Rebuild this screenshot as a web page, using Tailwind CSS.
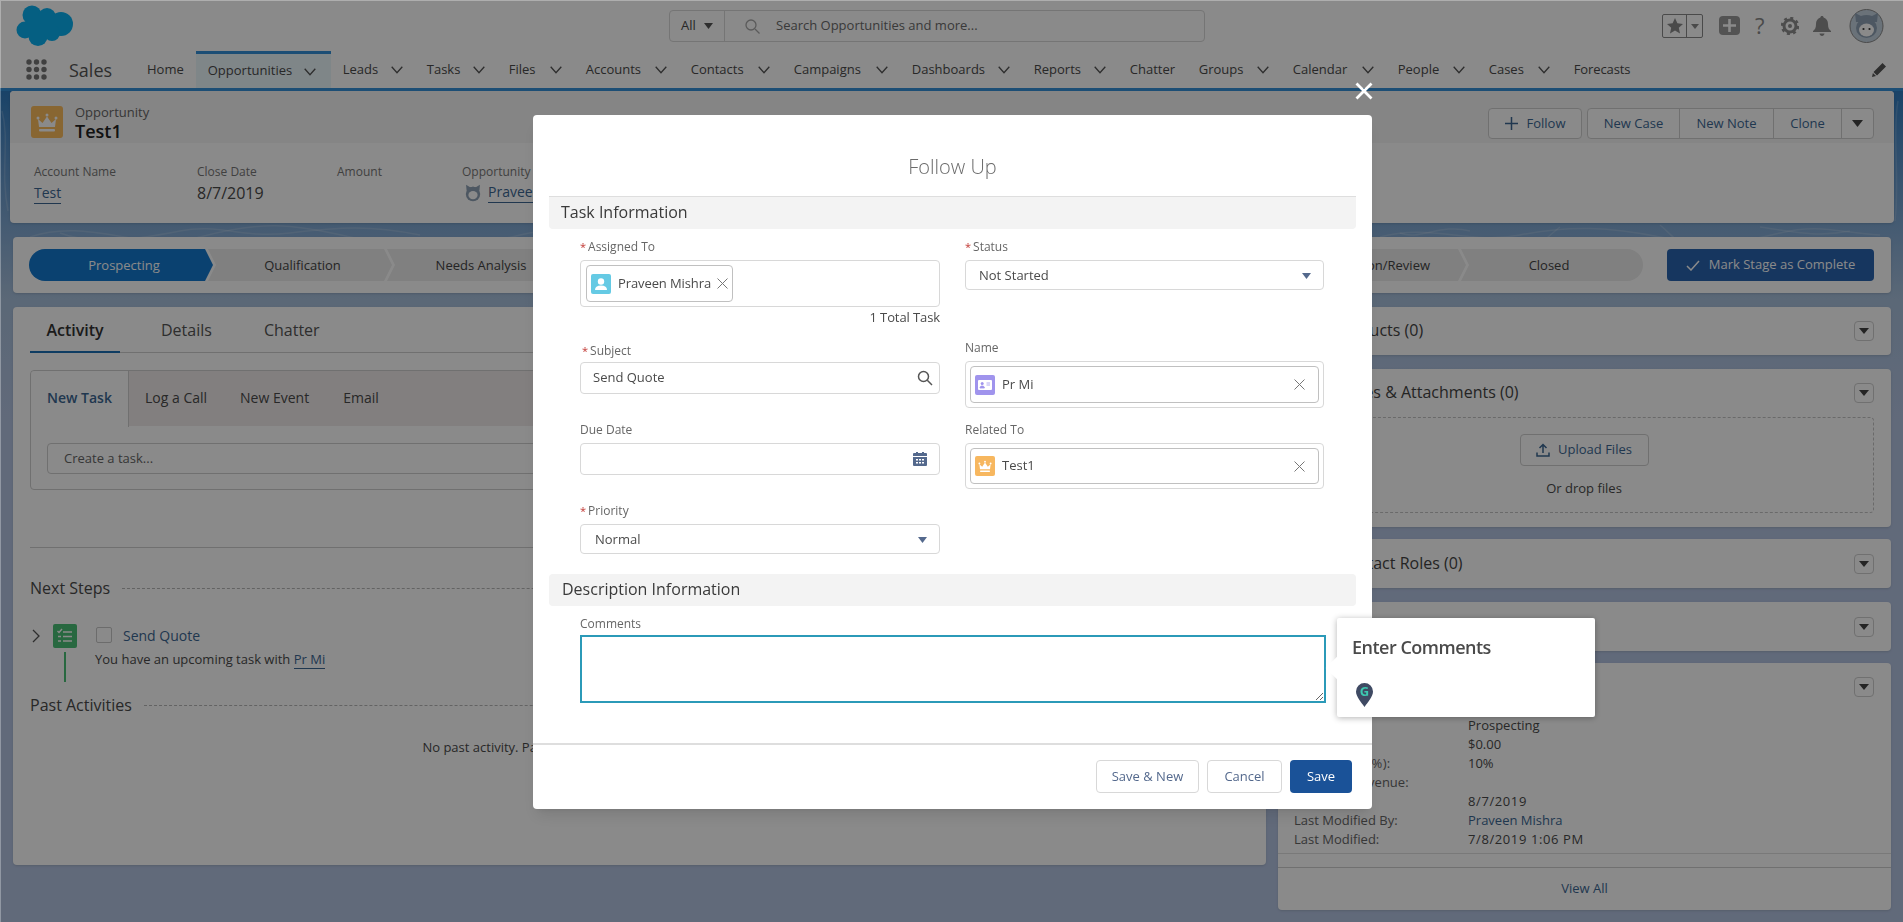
<!DOCTYPE html>
<html lang="en">
<head>
    <meta charset="UTF-8">
    <title>Follow Up</title>
    <script src="https://cdn.jsdelivr.net/npm/@tailwindcss/browser@4"></script>
</head>
<body class="h-[922px] overflow-hidden font-['Open_Sans',sans-serif] text-[13px] text-[#4a4a4a]">
    <!-- header -->
    <div class="h-[51px] bg-white relative flex items-start">
        <svg class="absolute left-[14px] top-[4px]" width="62" height="44" viewBox="14 4 62 44"><g fill="#0ab0f0"><circle cx="32" cy="15" r="9.5"/><circle cx="47" cy="17" r="9"/><circle cx="61" cy="24" r="12"/><circle cx="25" cy="30" r="8.5"/><circle cx="38" cy="36.5" r="9.5"/><circle cx="52" cy="33" r="8"/><rect x="28" y="16" width="28" height="18"/></g></svg>
        <div class="ml-[669px] mt-[10px] w-[536px] h-[32px] border border-[#d8d8d8] rounded flex items-center">
            <div class="w-[55px] h-full border-r border-[#d8d8d8] flex items-center pl-[11px]">All<svg class="ml-[8px]" width="9" height="6" viewBox="0 0 9 6"><path d="M0 0h9L4.500 6z" fill="#555"/></svg></div>
            <svg class="ml-[20px]" width="15" height="15" viewBox="0 0 15 15" fill="none" stroke="#a8a8a8" stroke-width="1.300"><circle cx="6" cy="6" r="5"/><path d="M10 10l4.500 4.500"/></svg>
            <span class="ml-[16px] text-[#6b6b6b]">Search Opportunities and more...</span>
        </div>
        <div class="ml-[457px] mt-[14px] w-[41px] h-[24px] border border-[#8a8a8a] rounded-[2px] flex items-center">
            <div class="w-[24px] h-full border-r border-[#8a8a8a] flex items-center justify-center"><svg width="16" height="16" viewBox="0 0 16 16"><path d="M8 0l2.400 5.300 5.600.6-4.200 3.800 1.200 5.700L8 12.500l-5 2.900 1.200-5.700L0 5.900l5.600-.6z" fill="#8a8a8a"/></svg></div>
            <svg class="ml-[4px]" width="8" height="5" viewBox="0 0 8 5"><path d="M0 0h8L4 5z" fill="#8a8a8a"/></svg>
        </div>
        <div class="ml-[16px] mt-[16px] w-[21px] h-[19px] rounded-[4px] bg-[#9a9a9a] flex items-center justify-center"><svg width="13" height="13" viewBox="0 0 13 13"><path d="M6.500 0v13M0 6.500h13" stroke="#fff" stroke-width="2.600"/></svg></div>
        <span class="ml-[15px] mt-[11px] text-[22px] leading-[28px] text-[#8a8a8a]">?</span>
        <svg class="ml-[16px] mt-[17px]" width="18" height="18" viewBox="0 0 18 18"><circle cx="9" cy="9" r="6" fill="none" stroke="#8f8f8f" stroke-width="3"/><circle cx="9" cy="9" r="8" fill="none" stroke="#8f8f8f" stroke-width="2.500" stroke-dasharray="3 3.280"/><circle cx="9" cy="9" r="2" fill="#8f8f8f"/></svg>
        <svg class="ml-[14px] mt-[16px]" width="18" height="20" viewBox="0 0 18 20"><path d="M9 0c1 0 1.600.7 1.600 1.600C13.500 2.400 15 5 15 8c0 4 1 5.500 3 7v1H0v-1c2-1.500 3-3 3-7 0-3 1.500-5.600 4.400-6.400C7.400.7 8 0 9 0zM6.500 17.500h5C11.300 19 10.300 20 9 20s-2.300-1-2.500-2.500z" fill="#8f8f8f"/></svg>
        <svg class="ml-[18px] mt-[9px]" width="35" height="34" viewBox="0 0 35 34"><circle cx="17.500" cy="17" r="16.500" fill="#c4d2e0" stroke="#8a8a8a" stroke-width="1"/><path d="M7 13L6 4l6 3c3.500-1.500 7.500-1.500 11 0l6-3-1 9z" fill="#8fa2b5"/><ellipse cx="17.500" cy="19" rx="10.500" ry="10" fill="#8fa2b5"/><ellipse cx="17.500" cy="21" rx="7.500" ry="6.500" fill="#fff"/><circle cx="14.500" cy="20" r="1.100" fill="#333"/><circle cx="20.500" cy="20" r="1.100" fill="#333"/></svg>
    </div>

    <!-- nav -->
    <div class="h-[40px] bg-white border-b-[3px] border-[#3490d8] flex items-stretch">
        <svg class="ml-[26px] mt-[8px]" width="21" height="21" viewBox="0 0 21 21" fill="#777"><circle cx="3" cy="3" r="2.700"/><circle cx="10.500" cy="3" r="2.700"/><circle cx="18" cy="3" r="2.700"/><circle cx="3" cy="10.500" r="2.700"/><circle cx="10.500" cy="10.500" r="2.700"/><circle cx="18" cy="10.500" r="2.700"/><circle cx="3" cy="18" r="2.700"/><circle cx="10.500" cy="18" r="2.700"/><circle cx="18" cy="18" r="2.700"/></svg>
        <span class="ml-[22px] w-[66px] text-[18px] leading-[38px] text-[#555]">Sales</span>
        <a class="px-3 flex items-center">Home</a>
        <a class="pl-3 pr-3 flex items-center bg-[#ebf7fc] border-t-[3px] border-[#3490d8] w-[135px]">Opportunities<svg class="ml-auto mr-[3px] mt-px" width="12" height="8" viewBox="0 0 12 8" fill="none" stroke="#555" stroke-width="1.300"><path d="M.7.7L6 6.800 11.300.7"/></svg></a>
        <a class="w-[84px] px-3 flex items-center">Leads<svg class="ml-auto" width="12" height="8" viewBox="0 0 12 8" fill="none" stroke="#555" stroke-width="1.300"><path d="M.7.7L6 6.800 11.300.7"/></svg></a>
        <a class="w-[82px] px-3 flex items-center">Tasks<svg class="ml-auto" width="12" height="8" viewBox="0 0 12 8" fill="none" stroke="#555" stroke-width="1.300"><path d="M.7.7L6 6.800 11.300.7"/></svg></a>
        <a class="w-[77px] px-3 flex items-center">Files<svg class="ml-auto" width="12" height="8" viewBox="0 0 12 8" fill="none" stroke="#555" stroke-width="1.300"><path d="M.7.7L6 6.800 11.300.7"/></svg></a>
        <a class="w-[105px] px-3 flex items-center">Accounts<svg class="ml-auto" width="12" height="8" viewBox="0 0 12 8" fill="none" stroke="#555" stroke-width="1.300"><path d="M.7.7L6 6.800 11.300.7"/></svg></a>
        <a class="w-[103px] px-3 flex items-center">Contacts<svg class="ml-auto" width="12" height="8" viewBox="0 0 12 8" fill="none" stroke="#555" stroke-width="1.300"><path d="M.7.7L6 6.800 11.300.7"/></svg></a>
        <a class="w-[118px] px-3 flex items-center">Campaigns<svg class="ml-auto" width="12" height="8" viewBox="0 0 12 8" fill="none" stroke="#555" stroke-width="1.300"><path d="M.7.7L6 6.800 11.300.7"/></svg></a>
        <a class="w-[122px] px-3 flex items-center">Dashboards<svg class="ml-auto" width="12" height="8" viewBox="0 0 12 8" fill="none" stroke="#555" stroke-width="1.300"><path d="M.7.7L6 6.800 11.300.7"/></svg></a>
        <a class="w-[96px] px-3 flex items-center">Reports<svg class="ml-auto" width="12" height="8" viewBox="0 0 12 8" fill="none" stroke="#555" stroke-width="1.300"><path d="M.7.7L6 6.800 11.300.7"/></svg></a>
        <a class="w-[69px] px-3 flex items-center">Chatter</a>
        <a class="w-[94px] px-3 flex items-center">Groups<svg class="ml-auto" width="12" height="8" viewBox="0 0 12 8" fill="none" stroke="#555" stroke-width="1.300"><path d="M.7.7L6 6.800 11.300.7"/></svg></a>
        <a class="w-[105px] px-3 flex items-center">Calendar<svg class="ml-auto" width="12" height="8" viewBox="0 0 12 8" fill="none" stroke="#555" stroke-width="1.300"><path d="M.7.7L6 6.800 11.300.7"/></svg></a>
        <a class="w-[91px] px-3 flex items-center">People<svg class="ml-auto" width="12" height="8" viewBox="0 0 12 8" fill="none" stroke="#555" stroke-width="1.300"><path d="M.7.7L6 6.800 11.300.7"/></svg></a>
        <a class="w-[85px] px-3 flex items-center">Cases<svg class="ml-auto" width="12" height="8" viewBox="0 0 12 8" fill="none" stroke="#555" stroke-width="1.300"><path d="M.7.7L6 6.800 11.300.7"/></svg></a>
        <a class="px-3 flex items-center tracking-[-0.1px]">Forecasts</a>
        <svg class="ml-auto mr-[17px] mt-[12px]" width="14" height="14" viewBox="0 0 14 14"><path d="M10.500 0L14 3.500 5 12.500 1.500 9zM.9 10L4 13.100 0 14z" fill="#555"/></svg>
    </div>

    <!-- page -->
    <div class="relative h-[831px] bg-linear-to-b from-[#2f7cc0] from-0% via-[#a8c0dc] via-[25%] to-[#b4c4e2] to-[40%] overflow-hidden">
        <svg class="absolute left-0 top-0" width="1903" height="300" viewBox="0 0 1903 300" fill="none" stroke="#fff" stroke-opacity=".16" stroke-width="1.500">
            <path d="M30 146c60-20 110 16 170 0s90-14 150 0 120 10 170-2 90 4 140 4"/>
            <path d="M60 142c30 12 80 6 120-2s60 8 110 2 80-8 130 2"/>
            <path d="M1380 146c50-14 90 8 140-2s90-8 140 2 80 6 120-4 60 0 100 2"/>
            <path d="M1400 142c20 8 40-10 70-2M1560 136c-10 8-20 16-20 22M1660 134c10 8 14 16 30 22M1760 136c40 6 60 10 90 4"/>
            <path d="M2 20c8 30-2 60 6 100M1898 10c-6 30 2 80-3 120"/>
        </svg>
        <div class="relative">
            <!-- highlights -->
            <div class="mx-[9px] ml-[10px] h-[132px] bg-white rounded shadow-sm">
                <div class="h-[52px] bg-[#f5f5f5] rounded-t flex items-start">
                    <div class="ml-[21px] mt-[15px] w-[32px] h-[32px] bg-[#fbbc5d] rounded-[3px] shrink-0"><svg width="32" height="32" viewBox="0 0 32 32" fill="#fff"><path d="M7 13l4.500 4L16 10.500l4.500 6.500L25 13l-1 8H8z"/><circle cx="7" cy="12" r="1.500"/><circle cx="16" cy="9" r="1.500"/><circle cx="25" cy="12" r="1.500"/><rect x="8" y="23" width="16" height="2.500" rx="1"/></svg></div>
                    <div class="ml-[12px] mt-[13px]">
                        <div class="leading-[17px] text-[#666]">Opportunity</div>
                        <div class="text-[18px] leading-[20px] font-semibold text-[#222]">Test1</div>
                    </div>
                    <div class="ml-auto mr-[20px] mt-[17px] flex text-[#3c6793]">
                        <div class="w-[94px] h-[31px] border border-[#d0d0d0] bg-white rounded flex items-center justify-center gap-[9px]"><svg width="13" height="13" viewBox="0 0 13 13"><path d="M6.500 0v13M0 6.500h13" stroke="#3c6793" stroke-width="1.500"/></svg>Follow</div>
                        <div class="ml-[5px] h-[31px] border border-[#d0d0d0] bg-white rounded flex items-center">
                            <div class="w-[92px] h-full flex items-center justify-center border-r border-[#d0d0d0]">New Case</div>
                            <div class="w-[94px] h-full flex items-center justify-center border-r border-[#d0d0d0]">New Note</div>
                            <div class="w-[68px] h-full flex items-center justify-center border-r border-[#d0d0d0]">Clone</div>
                            <div class="w-[31px] flex items-center justify-center"><svg width="11" height="7" viewBox="0 0 11 7"><path d="M0 0h11L5.500 7z" fill="#444"/></svg></div>
                        </div>
                    </div>
                </div>
                <div class="pl-[24px] pt-[21px] flex">
                    <div class="w-[163px]"><div class="text-[12px] leading-[16px] text-[#777]">Account Name</div><div class="mt-[3px] text-[14px] leading-[20px]"><span class="text-[#3c6793] border-b border-[#3c6793] pb-[1px]">Test</span></div></div>
                    <div class="w-[140px]"><div class="text-[12px] leading-[16px] text-[#777]">Close Date</div><div class="mt-[3px] text-[16px] leading-[20px]">8/7/2019</div></div>
                    <div class="w-[125px]"><div class="text-[12px] leading-[16px] text-[#777]">Amount</div></div>
                    <div><div class="text-[12px] leading-[16px] text-[#777]">Opportunity Owner</div><div class="mt-[2px] flex text-[14px] leading-[20px]"><svg class="mr-[6px] ml-[2px] mt-[1px]" width="18" height="19" viewBox="0 0 35 36"><path d="M5 14L4 3l8 5c3.500-1.500 7.500-1.500 11 0l8-5-1 11z" fill="#8fa2b5"/><ellipse cx="17.500" cy="21" rx="14" ry="14" fill="#8fa2b5"/><ellipse cx="17.500" cy="23" rx="9" ry="8" fill="#fff"/></svg><span class="text-[#3c6793] border-b border-[#3c6793]">Praveen Mishra</span></div></div>
                </div>
            </div>

            <!-- path -->
            <div class="mt-[14px] ml-[13px] mr-[12px] h-[56px] bg-white rounded shadow-sm pl-[16px] flex items-center">
                <div class="w-[1614px] h-[32px] rounded-full overflow-hidden flex text-[#444]">
                    <div class="w-[184px] shrink-0 -mr-[5px] pl-[6px] pt-px bg-[#1379cf] text-white flex items-center justify-center [clip-path:polygon(0_0,calc(100%-8px)_0,100%_50%,calc(100%-8px)_100%,0_100%)]">Prospecting</div>
                    <div class="w-[184px] shrink-0 -mr-[5px] pl-[5px] pt-px bg-[#ececec] flex items-center justify-center [clip-path:polygon(0_0,calc(100%-8px)_0,100%_50%,calc(100%-8px)_100%,0_100%,8px_50%)]">Qualification</div>
                    <div class="w-[184px] shrink-0 -mr-[5px] pl-[4px] pt-px bg-[#ececec] flex items-center justify-center [clip-path:polygon(0_0,calc(100%-8px)_0,100%_50%,calc(100%-8px)_100%,0_100%,8px_50%)]">Needs Analysis</div>
                    <div class="w-[184px] shrink-0 -mr-[5px] bg-[#ececec] [clip-path:polygon(0_0,calc(100%-8px)_0,100%_50%,calc(100%-8px)_100%,0_100%,8px_50%)]"></div>
                    <div class="w-[184px] shrink-0 -mr-[5px] bg-[#ececec] [clip-path:polygon(0_0,calc(100%-8px)_0,100%_50%,calc(100%-8px)_100%,0_100%,8px_50%)]"></div>
                    <div class="w-[184px] shrink-0 -mr-[5px] bg-[#ececec] [clip-path:polygon(0_0,calc(100%-8px)_0,100%_50%,calc(100%-8px)_100%,0_100%,8px_50%)]"></div>
                    <div class="w-[184px] shrink-0 -mr-[5px] bg-[#ececec] [clip-path:polygon(0_0,calc(100%-8px)_0,100%_50%,calc(100%-8px)_100%,0_100%,8px_50%)]"></div>
                    <div class="w-[184px] shrink-0 -mr-[5px] pr-[6px] pt-px bg-[#ececec] flex items-center justify-center [clip-path:polygon(0_0,calc(100%-8px)_0,100%_50%,calc(100%-8px)_100%,0_100%,8px_50%)]">Negotiation/Review</div>
                    <div class="w-[182px] shrink-0 pr-[6px] pt-px bg-[#ececec] flex items-center justify-center [clip-path:polygon(0_0,100%_0,100%_100%,0_100%,8px_50%)]">Closed</div>
                </div>
                <div class="ml-[24px] w-[207px] h-[32px] bg-[#2964b0] rounded text-white flex items-center justify-center gap-[9px]"><svg width="14" height="11" viewBox="0 0 14 11" fill="none" stroke="#fff" stroke-width="1.500"><path d="M1 6l4 4 8-9"/></svg>Mark Stage as Complete</div>
            </div>

            <!-- columns -->
            <div class="mt-[14px] ml-[13px] mr-[12px] flex gap-[12px] items-start">
                <div class="w-[1253px] h-[558px] bg-white rounded shadow-sm px-[17px]">
                    <div class="h-[46px] border-b border-[#cfcfcf] flex text-[16px] leading-[22px] text-[#555]">
                        <div class="w-[90px] h-[46px] pt-[12px] text-center font-semibold text-[#333] border-b-[2px] border-[#1a6fb5]">Activity</div>
                        <div class="ml-[41px] pt-[12px]">Details</div>
                        <div class="ml-[52px] pt-[12px]">Chatter</div>
                    </div>
                    <div class="mt-[17px] h-[120px] border border-[#cfcfcf] rounded">
                        <div class="h-[55px] bg-[#f0eaea] rounded-t flex text-[14px]">
                            <div class="w-[98px] h-[56px] bg-white border-r border-[#cfcfcf] rounded-tl pl-[16px] pt-[16px] font-semibold text-[#3c6793]">New Task</div>
                            <div class="ml-[16px] pt-[16px]">Log a Call</div>
                            <div class="ml-[33px] pt-[16px]">New Event</div>
                            <div class="ml-[34px] pt-[16px]">Email</div>
                        </div>
                        <div class="mx-[16px] mt-[17px] h-[31px] border border-[#cfcfcf] rounded flex items-center pl-[16px] text-[#666]">Create a task...</div>
                    </div>
                    <div class="mt-[57px] border-t border-[#cfcfcf]"></div>
                    <div class="mt-[30px] h-[20px] flex items-center text-[16px]">Next Steps<div class="ml-[12px] flex-1 border-t border-dashed border-[#b8b8b8]"></div></div>
                    <div class="mt-[26px] flex">
                        <svg class="mt-[5px] ml-[1px]" width="10" height="14" viewBox="0 0 10 14" fill="none" stroke="#555" stroke-width="1.300"><path d="M2 1l6 6-6 6"/></svg>
                        <div class="ml-[12px] w-[24px]">
                            <div class="w-[24px] h-[24px] bg-[#4bc076] rounded-[2px]"><svg width="24" height="24" viewBox="0 0 24 24" fill="none" stroke="#fff" stroke-width="1.400"><path d="M10 8h9M10 12.500h9M10 17h9M5 12.500h3M5 17h3M4.500 7l1.500 1.500 3-3.500"/></svg></div>
                            <div class="mx-auto mt-[4px] w-[2px] h-[30px] bg-[#4bc076]"></div>
                        </div>
                        <div class="ml-[18px]">
                            <div class="h-[22px] flex items-center">
                                <div class="w-[16px] h-[16px] ml-px border border-[#c8c8c8] rounded-[2px]"></div>
                                <span class="ml-[11px] text-[14px] text-[#3c6793]">Send Quote</span>
                            </div>
                            <div class="mt-[4px] leading-[18px]">You have an upcoming task with <span class="text-[#3c6793] border-b border-[#3c6793]">Pr Mi</span></div>
                        </div>
                    </div>
                    <div class="mt-[13px] h-[20px] flex items-center text-[16px]">Past Activities<div class="ml-[12px] flex-1 border-t border-dashed border-[#b8b8b8]"></div></div>
                    <div class="mt-[23px] pl-[2px] leading-[18px] text-center">No past activity. Past meetings and tasks marked as done show up here.</div>
                </div>

                <div class="flex-1">
                    <div class="h-[48px] bg-white rounded shadow-sm flex items-center pl-[56px] pr-[17px] text-[16px] font-medium text-[#444]"><span class="-mt-[2px]">Products (0)</span><div class="ml-auto w-5 h-5 border border-[#cfcfcf] rounded flex items-center justify-center"><svg width="10" height="6" viewBox="0 0 10 6"><path d="M0 0h10L5 6z" fill="#444"/></svg></div></div>
                    <div class="mt-[14px] h-[158px] bg-white rounded shadow-sm">
                        <div class="h-[48px] flex items-center pl-[59px] pr-[17px] text-[16px] font-medium text-[#444]"><span class="-mt-[2px]">Notes &amp; Attachments (0)</span><div class="ml-auto w-5 h-5 border border-[#cfcfcf] rounded flex items-center justify-center"><svg width="10" height="6" viewBox="0 0 10 6"><path d="M0 0h10L5 6z" fill="#444"/></svg></div></div>
                        <div class="ml-[16px] mr-[17px] h-[96px] border border-dashed border-[#c4c4c4] rounded flex flex-col items-center">
                            <div class="mt-[16px] w-[129px] h-[32px] border border-[#cfcfcf] rounded flex items-center justify-center gap-[8px] text-[#3c6793]"><svg width="14" height="14" viewBox="0 0 14 14" fill="none" stroke="#3c6793" stroke-width="1.500"><path d="M7 10V1.500M3.500 5L7 1.500 10.500 5M1 9.500V13h12V9.500"/></svg>Upload Files</div>
                            <div class="mt-[13px] leading-[18px]">Or drop files</div>
                        </div>
                    </div>
                    <div class="mt-[12px] h-[49px] bg-white rounded shadow-sm flex items-center pl-[60px] pr-[17px] text-[16px] font-medium text-[#444]"><span class="-mt-[2px]">Contact Roles (0)</span><div class="ml-auto w-5 h-5 border border-[#cfcfcf] rounded flex items-center justify-center"><svg width="10" height="6" viewBox="0 0 10 6"><path d="M0 0h10L5 6z" fill="#444"/></svg></div></div>
                    <div class="mt-[14px] h-[49px] bg-white rounded shadow-sm flex items-center justify-end pr-[17px]"><div class="w-5 h-5 border border-[#cfcfcf] rounded flex items-center justify-center"><svg width="10" height="6" viewBox="0 0 10 6"><path d="M0 0h10L5 6z" fill="#444"/></svg></div></div>
                    <div class="mt-[12px] h-[247px] bg-white rounded shadow-sm">
                        <div class="h-[48px] flex items-center justify-end pr-[17px]"><div class="w-5 h-5 border border-[#cfcfcf] rounded flex items-center justify-center"><svg width="10" height="6" viewBox="0 0 10 6"><path d="M0 0h10L5 6z" fill="#444"/></svg></div></div>
                        <div class="mt-[5px] pl-[16px] grid grid-cols-[174px_1fr] auto-rows-[19px] items-center">
                            <span></span><span>Prospecting</span>
                            <span></span><span>$0.00</span>
                            <span class="text-[#666] tracking-[0.4px]">Probability (%):</span><span>10%</span>
                            <span class="text-[#666]">Expected Revenue:</span><span></span>
                            <span></span><span class="tracking-[0.6px]">8/7/2019</span>
                            <span class="text-[#666]">Last Modified By:</span><span class="text-[#3c6793]">Praveen Mishra</span>
                            <span class="text-[#666]">Last Modified:</span><span class="tracking-[0.6px]">7/8/2019 1:06 PM</span>
                        </div>
                        <div class="mt-[4px] border-t border-[#e0e0e0]"></div>
                        <div class="mt-[13px] border-t border-[#cfcfcf] h-[43px] flex items-center justify-center text-[#3c6793]">View All</div>
                    </div>
                </div>
            </div>
        </div>
    </div>

    <!-- backdrop -->
    <div class="fixed inset-0 bg-black/[0.46] border-l border-t border-white/30"></div>

    <svg class="fixed left-[1355px] top-[82px]" width="18" height="18" viewBox="0 0 18 18"><path d="M1.500 1.500l15 15M16.500 1.500l-15 15" stroke="#fff" stroke-width="2.800"/></svg>

    <!-- modal -->
    <div class="fixed left-[533px] top-[115px] w-[839px] h-[694px] bg-white rounded shadow-lg text-[#4a4a4a]">
        <div class="h-[81px] pt-[38px] text-center text-[20px] leading-[28px] font-light text-[#6b6b6b]">Follow Up</div>
        <div class="mx-[16px] h-[33px] pb-[2px] bg-[#f3f3f3] border-t border-[#dedede] rounded-b flex items-center pl-[12px] text-[16px] text-[#3a3a3a]">Task Information</div>

        <div class="mt-[10px] ml-[47px] flex gap-[25px]">
            <div class="w-[360px]">
                <div class="text-[12px] leading-[16px] text-[#666]"><span class="text-[#c23934] text-[11px] mr-[2px]">*</span>Assigned To</div>
                <div class="mt-[5px] h-[47px] border border-[#d8d8d8] rounded pl-[5px] pt-[4px]">
                    <div class="w-[147px] h-[37px] border border-[#c0c0c0] rounded flex items-center pl-[4px]">
                        <div class="w-[20px] h-[20px] bg-[#65cae4] rounded-[2px] flex items-center justify-center"><svg width="14" height="14" viewBox="0 0 14 14" fill="#fff"><circle cx="7" cy="4.500" r="3.200"/><path d="M1 13c0-3 2-4.500 6-4.500s6 1.500 6 4.500z"/></svg></div>
                        <span class="ml-[7px] whitespace-nowrap tracking-[-0.1px]">Praveen Mishra</span>
                        <svg class="ml-auto mr-[4px]" width="11" height="11" viewBox="0 0 11 11" stroke="#777"><path d="M.5.500l10 10M10.500.500l-10 10"/></svg>
                    </div>
                </div>
                <div class="mt-[2px] leading-[16px] text-right tracking-[-0.1px]">1 Total Task</div>
                <div class="mt-[18px] ml-[2px] text-[12px] leading-[16px] text-[#666]"><span class="text-[#c23934] text-[11px] mr-[2px]">*</span>Subject</div>
                <div class="mt-[3px] h-[32px] border border-[#d8d8d8] rounded flex items-center pl-[12px] pr-[6px]">Send Quote<svg class="ml-auto" width="16" height="16" viewBox="0 0 16 16" fill="none" stroke="#555" stroke-width="1.500"><circle cx="6.500" cy="6.500" r="5"/><path d="M10.300 10.300l4.700 4.700"/></svg></div>
                <div class="mt-[28px] text-[12px] leading-[16px] text-[#666]">Due Date</div>
                <div class="mt-[5px] h-[32px] border border-[#d8d8d8] rounded flex items-center justify-end pr-[12px]"><svg width="14" height="14" viewBox="0 0 14 14" fill="#54698d"><path d="M0 5h14v8a1 1 0 0 1-1 1H1a1 1 0 0 1-1-1zM0 2a1 1 0 0 1 1-1h2V0h2v1h4V0h2v1h2a1 1 0 0 1 1 1v2H0z"/><g fill="#fff"><rect x="3" y="7" width="2" height="1.500"/><rect x="6" y="7" width="2" height="1.500"/><rect x="9" y="7" width="2" height="1.500"/><rect x="3" y="10" width="2" height="1.500"/><rect x="6" y="10" width="2" height="1.500"/><rect x="9" y="10" width="2" height="1.500"/></g></svg></div>
                <div class="mt-[28px] text-[12px] leading-[16px] text-[#666]"><span class="text-[#c23934] text-[11px] mr-[2px]">*</span>Priority</div>
                <div class="mt-[5px] h-[30px] pt-px border border-[#d8d8d8] rounded flex items-center pl-[14px] pr-[12px]">Normal<svg class="ml-auto" width="9" height="6" viewBox="0 0 9 6"><path d="M0 0h9L4.500 6z" fill="#54698d"/></svg></div>
            </div>
            <div class="w-[359px]">
                <div class="text-[12px] leading-[16px] text-[#666]"><span class="text-[#c23934] text-[11px] mr-[2px]">*</span>Status</div>
                <div class="mt-[5px] h-[30px] pt-px border border-[#d8d8d8] rounded flex items-center pl-[13px] pr-[12px]">Not Started<svg class="ml-auto" width="9" height="6" viewBox="0 0 9 6"><path d="M0 0h9L4.500 6z" fill="#54698d"/></svg></div>
                <div class="mt-[50px] text-[12px] leading-[16px] text-[#666]">Name</div>
                <div class="mt-[5px] h-[47px] border border-[#d8d8d8] rounded p-[4px]">
                    <div class="h-[37px] border border-[#c0c0c0] rounded flex items-center pl-[4px] pr-[13px]">
                        <div class="w-[20px] h-[20px] bg-[#a094ed] rounded-[2px] flex items-center justify-center"><svg width="14" height="10" viewBox="0 0 14 10"><rect width="14" height="10" rx="1" fill="#fff"/><circle cx="4.200" cy="3.600" r="1.500" fill="#a094ed"/><path d="M2 8c0-1.500 1-2 2.200-2s2.200.5 2.200 2zM8.500 3h3.500M8.500 5h3.500" fill="#a094ed" stroke="#a094ed" stroke-width=".8"/></svg></div>
                        <span class="ml-[7px]">Pr Mi</span>
                        <svg class="ml-auto" width="11" height="11" viewBox="0 0 11 11" stroke="#777"><path d="M.5.500l10 10M10.500.500l-10 10"/></svg>
                    </div>
                </div>
                <div class="mt-[14px] text-[12px] leading-[16px] text-[#666]">Related To</div>
                <div class="mt-[5px] h-[46px] border border-[#d8d8d8] rounded p-[4px]">
                    <div class="h-[36px] border border-[#c0c0c0] rounded flex items-center pl-[4px] pr-[13px]">
                        <div class="w-[20px] h-[20px] bg-[#f7b75f] rounded-[2px]"><svg width="20" height="20" viewBox="0 0 32 32" fill="#fff"><path d="M7 13l4.500 4L16 10.500l4.500 6.500L25 13l-1 8H8z"/><circle cx="7" cy="12" r="1.500"/><circle cx="16" cy="9" r="1.500"/><circle cx="25" cy="12" r="1.500"/><rect x="8" y="23" width="16" height="2.500" rx="1"/></svg></div>
                        <span class="ml-[7px]">Test1</span>
                        <svg class="ml-auto" width="11" height="11" viewBox="0 0 11 11" stroke="#777"><path d="M.5.500l10 10M10.500.500l-10 10"/></svg>
                    </div>
                </div>
            </div>
        </div>

        <div class="mt-[20px] mx-[16px] h-[32px] pb-[2px] bg-[#f3f3f3] rounded flex items-center pl-[13px] text-[16px] text-[#3a3a3a]">Description Information</div>
        <div class="mt-[10px] ml-[47px] text-[12px] leading-[16px] text-[#666]">Comments</div>
        <textarea class="block mt-[3px] ml-[47px] w-[746px] h-[68px] border-2 border-[#2b9ab8] outline-none"></textarea>
        <div class="mt-[40px] border-t-2 border-[#dedede]"></div>
        <div class="mt-[15px] pr-[20px] flex justify-end gap-[8px]">
            <div class="w-[103px] h-[33px] border border-[#d8d8d8] rounded flex items-center justify-center text-[#54698d]">Save &amp; New</div>
            <div class="w-[75px] h-[33px] border border-[#d8d8d8] rounded flex items-center justify-center text-[#54698d]">Cancel</div>
            <div class="w-[62px] h-[33px] bg-[#1a5298] rounded flex items-center justify-center text-white">Save</div>
        </div>
    </div>

    <!-- popover -->
    <div class="fixed left-[1337px] top-[618px] w-[258px] h-[99px] bg-white rounded-[2px] shadow-[0_1px_6px_rgba(0,0,0,0.3)]">
        <div class="absolute -left-[8px] top-[42px] w-[16px] h-[16px] bg-white rotate-45"></div>
        <div class="relative pl-[15px] pt-[16px] text-[18px] leading-[26px] font-semibold tracking-[-0.5px] text-[#4a4a4a]">Enter Comments</div>
        <svg class="absolute left-[19px] top-[65px]" width="17" height="24" viewBox="0 0 17 24"><path d="M8.500 24C5 19 0 13.500 0 8.500a8.500 8.500 0 0 1 17 0C17 13.500 12 19 8.500 24z" fill="#3f4a63"/><text x="8.500" y="13" text-anchor="middle" font-family="Open Sans, sans-serif" font-size="13" font-weight="700" fill="#3dc9b0">G</text></svg>
    </div>
</body>
</html>
